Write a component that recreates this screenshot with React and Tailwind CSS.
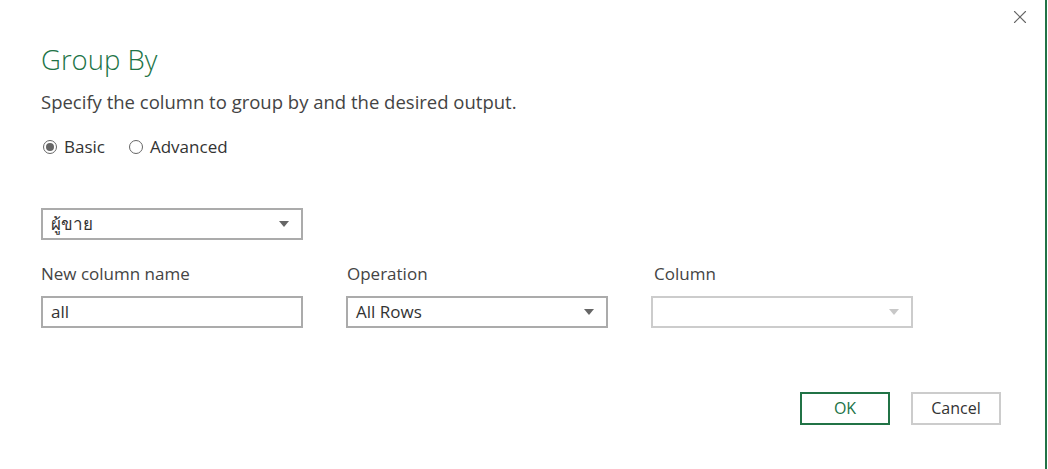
import { X } from 'lucide-react';

const font = { fontFamily: '"Open Sans", "Noto Sans", "DejaVu Sans", sans-serif' };

function Caret({ light }) {
  return (
    <svg width="10" height="6" viewBox="0 0 10 6" className="shrink-0">
      <path d="M0 0h10L5 6z" fill={light ? '#c8c8c8' : '#666'} />
    </svg>
  );
}

function Select({ value, light, className }) {
  return (
    <div
      className={`flex h-[32px] w-[262px] items-center justify-between border-2 pl-[8px] pr-[12px] ${light ? 'border-[#cccccc]' : 'border-[#ababab]'} ${className || ''}`}
    >
      <span className="text-[17px] text-[#333]">{value}</span>
      <Caret light={light} />
    </div>
  );
}

function Radio({ checked, label }) {
  return (
    <label className="flex items-center gap-[7px]">
      <span className="flex h-[14px] w-[14px] items-center justify-center rounded-full border border-[#666] bg-white">
        {checked && <span className="h-[8px] w-[8px] rounded-full bg-[#666]" />}
      </span>
      <span className="text-[17px] text-[#333]">{label}</span>
    </label>
  );
}

export default function App() {
  return (
    <div className="h-[469px] w-[1048px] bg-white" style={font}>
      <div className="relative h-full w-[1047px] border-r-2 border-[#217346] pl-[41px] pt-[40px]">
        <button className="absolute right-[14px] top-[6px] text-[#666]">
          <X size={22} strokeWidth={1.2} />
        </button>

        <h1 className="text-[27.5px] font-light leading-[40px] text-[#217346]">Group By</h1>
        <p className="mt-[10px] text-[18.5px] leading-[24px] text-[#444]">
          Specify the column to group by and the desired output.
        </p>

        <div className="ml-[2px] mt-[20px] flex items-center gap-[24px]">
          <Radio checked label="Basic" />
          <Radio label="Advanced" />
        </div>

        <Select value="ผู้ขาย" className="mt-[48px]" />

        <div className="mt-[22px] flex gap-[43px]">
          <div className="flex flex-col">
            <span className="text-[17px] leading-[24px] text-[#444]">New column name</span>
            <div className="mt-[10px] flex h-[32px] w-[262px] items-center border-2 border-[#ababab] pl-[8px]">
              <span className="text-[17px] text-[#333]">all</span>
            </div>
          </div>
          <div className="flex flex-col">
            <span className="pl-[1px] text-[17px] leading-[24px] text-[#444]">Operation</span>
            <Select value="All Rows" className="mt-[10px]" />
          </div>
          <div className="flex flex-col">
            <span className="pl-[3px] text-[17px] leading-[24px] text-[#444]">Column</span>
            <Select value="" light className="mt-[10px]" />
          </div>
        </div>

        <div className="mt-[64px] flex justify-end gap-[21px] pr-[44px]">
          <button className="h-[33px] w-[90px] border-2 border-[#217346] text-[16px] text-[#217346]">
            OK
          </button>
          <button className="h-[33px] w-[90px] border-2 border-[#cccccc] text-[16px] text-[#333]">
            Cancel
          </button>
        </div>
      </div>
    </div>
  );
}
